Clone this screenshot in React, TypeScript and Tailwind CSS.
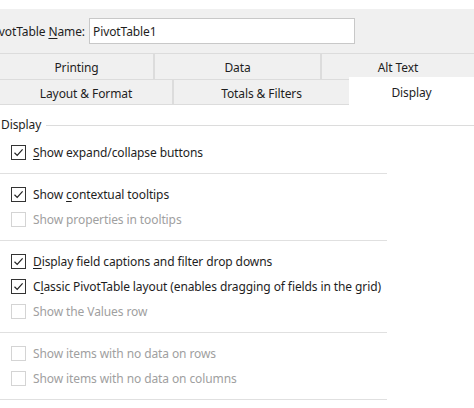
import React from 'react';

interface OptionItem {
  label: string;
  accessKey?: number;
  checked: boolean;
  disabled?: boolean;
}

const sections: OptionItem[][] = [
  [{ label: 'Show expand/collapse buttons', accessKey: 0, checked: true }],
  [
    { label: 'Show contextual tooltips', accessKey: 5, checked: true },
    { label: 'Show properties in tooltips', checked: false, disabled: true },
  ],
  [
    { label: 'Display field captions and filter drop downs', accessKey: 0, checked: true },
    { label: 'Classic PivotTable layout (enables dragging of fields in the grid)', accessKey: 1, checked: true },
    { label: 'Show the Values row', checked: false, disabled: true },
  ],
  [
    { label: 'Show items with no data on rows', checked: false, disabled: true },
    { label: 'Show items with no data on columns', checked: false, disabled: true },
  ],
];

const topTabs = ['Printing', 'Data', 'Alt Text'];
const bottomTabs = ['Layout & Format', 'Totals & Filters', 'Display'];

const Label: React.FC<{ text: string; accessKey?: number }> = ({ text, accessKey }) => {
  if (accessKey === undefined) return <>{text}</>;
  return (
    <>
      {text.slice(0, accessKey)}
      <span className="underline underline-offset-2">{text[accessKey]}</span>
      {text.slice(accessKey + 1)}
    </>
  );
};

const Checkbox: React.FC<{ checked: boolean; disabled?: boolean }> = ({ checked, disabled }) => (
  <span
    className={`flex h-[15px] w-[15px] shrink-0 items-center justify-center border bg-white ${
      disabled ? 'border-[#d4d4d4]' : 'border-[#333333]'
    }`}
  >
    {checked && (
      <svg viewBox="0 0 13 13" className="h-[13px] w-[13px]">
        <path d="M2.5 6.8 L5.2 9.4 L10.6 3.4" fill="none" stroke="#222" strokeWidth="1.2" />
      </svg>
    )}
  </span>
);

export default function App() {
  return (
    <div
      className="h-[408px] w-[474px] overflow-hidden bg-white text-[12px] tracking-[-0.1px] text-[#1e1e1e]"
      style={{ fontFamily: '"Noto Sans", "Open Sans", sans-serif' }}
    >
      <div className="h-[9px] bg-white" />

      {/* Name row */}
      <div className="flex h-[44px] items-start bg-[#f0f0f0] pt-[9px]">
        <div className="mt-[5px] flex w-[85px] shrink-0 justify-end overflow-hidden whitespace-nowrap">
          <span className="shrink-0">
            PivotTable <Label text="Name:" accessKey={0} />
          </span>
        </div>
        <div className="ml-[4px] flex h-[26px] w-[266px] items-center border border-[#c8c8c8] bg-white px-[3px] pt-[1px]">
          PivotTable1
        </div>
      </div>

      {/* Tabs */}
      <div className="flex h-[26px] border-t border-[#dcdcdc] bg-[#f0f0f0]">
        {topTabs.map((t, i) => (
          <div
            key={t}
            className={`flex items-center justify-center pt-[3px] ${i === 0 ? 'w-[155px]' : i === 1 ? 'w-[167px]' : 'flex-1'} ${
              i < 2 ? 'border-r-2 border-[#dcdcdc]' : ''
            }`}
          >
            {t}
          </div>
        ))}
      </div>
      <div className="flex h-[26px]">
        {bottomTabs.map((t, i) => (
          <div
            key={t}
            className={`flex items-center justify-center pt-[3px] ${i === 0 ? 'w-[174px]' : i === 1 ? 'w-[175px]' : 'flex-1'} ${
              i === 2
                ? '-mt-[2px] bg-white'
                : 'border-t border-b border-[#dcdcdc] bg-[#f0f0f0]'
            } ${i === 0 ? 'border-r-2' : ''}`}
          >
            {t}
          </div>
        ))}
      </div>

      {/* Display group */}
      <div className="mt-[11px] flex items-center">
        <span className="ml-[1px] leading-[18px]">Display</span>
        <div className="ml-[5px] h-px flex-1 bg-[#dcdcdc]" />
      </div>

      <div className="mt-[4px]">
        {sections.map((items, si) => (
          <div key={si} className="w-[387px] border-b border-[#e0e0e0] py-[8px] first:pt-[2px]">
            {items.map(item => (
              <div key={item.label} className="flex h-[25px] items-center pl-[11px]">
                <Checkbox checked={item.checked} disabled={item.disabled} />
                <span className={`ml-[7px] whitespace-nowrap ${item.disabled ? 'text-[#a0a0a0]' : ''}`}>
                  <Label text={item.label} accessKey={item.accessKey} />
                </span>
              </div>
            ))}
          </div>
        ))}
      </div>
    </div>
  );
}
